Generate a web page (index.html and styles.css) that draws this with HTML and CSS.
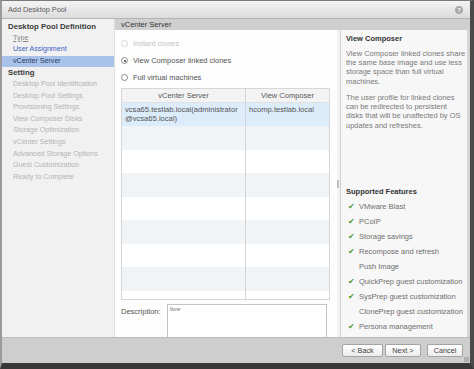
FILE: index.html
```html
<!DOCTYPE html>
<html lang="en">
<head>
    <meta charset="UTF-8">
    <title>Add Desktop Pool</title>
    <link rel="stylesheet" href="styles.css">
</head>
<body>
    <div class="window">
        <div class="titlebar">
            <span class="title">Add Desktop Pool</span>
            <span class="help">?</span>
        </div>

        <div class="body">
            <div class="nav">
                <div class="nav-group">Desktop Pool Definition</div>
                <div class="nav-item done">Type</div>
                <div class="nav-item link">User Assignment</div>
                <div class="nav-item current">vCenter Server</div>
                <div class="nav-group">Setting</div>
                <div class="nav-item">Desktop Pool Identification</div>
                <div class="nav-item">Desktop Pool Settings</div>
                <div class="nav-item">Provisioning Settings</div>
                <div class="nav-item">View Composer Disks</div>
                <div class="nav-item">Storage Optimization</div>
                <div class="nav-item">vCenter Settings</div>
                <div class="nav-item">Advanced Storage Options</div>
                <div class="nav-item">Guest Customization</div>
                <div class="nav-item">Ready to Complete</div>
            </div>

            <div class="page">
                <div class="page-head">vCenter Server</div>
                <div class="page-body">
                    <div class="main">
                        <div class="radios">
                            <label class="radio disabled"><span class="dot"></span>Instant clones</label>
                            <label class="radio checked"><span class="dot"></span>View Composer linked clones</label>
                            <label class="radio"><span class="dot"></span>Full virtual machines</label>
                        </div>

                        <div class="grid">
                            <div class="grid-head">
                                <div class="col-a">vCenter Server</div>
                                <div class="col-b">View Composer</div>
                            </div>
                            <div class="grid-row selected">
                                <div class="col-a">vcsa65.testlab.local(administrator<br>@vcsa65.local)</div>
                                <div class="col-b">hcomp.testlab.local</div>
                            </div>
                            <div class="grid-row alt"><div class="col-a"></div><div class="col-b"></div></div>
                            <div class="grid-row"><div class="col-a"></div><div class="col-b"></div></div>
                            <div class="grid-row alt"><div class="col-a"></div><div class="col-b"></div></div>
                            <div class="grid-row"><div class="col-a"></div><div class="col-b"></div></div>
                            <div class="grid-row alt"><div class="col-a"></div><div class="col-b"></div></div>
                            <div class="grid-row"><div class="col-a"></div><div class="col-b"></div></div>
                            <div class="grid-row alt"><div class="col-a"></div><div class="col-b"></div></div>
                            <div class="grid-row"><div class="col-a"></div><div class="col-b"></div></div>
                        </div>

                        <div class="desc">
                            <span class="desc-label">Description:</span>
                            <div class="desc-box">None</div>
                        </div>
                    </div>

                    <div class="splitter"><span class="grip"></span></div>

                    <div class="info">
                        <h3>View Composer</h3>
                        <p>View Composer linked clones share the same base image and use less storage space than full virtual machines.</p>
                        <p>The user profile for linked clones can be redirected to persistent disks that will be unaffected by OS updates and refreshes.</p>

                        <h3 class="features-title">Supported Features</h3>
                        <ul class="features">
                            <li class="yes">VMware Blast</li>
                            <li class="yes">PCoIP</li>
                            <li class="yes">Storage savings</li>
                            <li class="yes">Recompose and refresh</li>
                            <li>Push Image</li>
                            <li class="yes">QuickPrep guest customization</li>
                            <li class="yes">SysPrep guest customization</li>
                            <li>ClonePrep guest customization</li>
                            <li class="yes">Persona management</li>
                        </ul>
                    </div>
                </div>
            </div>
        </div>

        <div class="footer">
            <button class="btn">&lt; Back</button>
            <button class="btn">Next &gt;</button>
            <button class="btn cancel">Cancel</button>
            <span class="resize"></span>
        </div>
    </div>
</body>
</html>
```

FILE: styles.css
```css
* {
    margin: 0;
    padding: 0;
    box-sizing: border-box;
}

body {
    font-family: 'Liberation Sans', Arial, sans-serif;
    font-size: 7.5px;
    color: #555;
    background: #3c3c3c;
}

.window {
    width: 474px;
    height: 369px;
    display: flex;
    flex-direction: column;
    border-top: 1px solid #7a7a7a;
    border-left: 2px solid #9a9a9a;
    border-right: 4px solid #4a4a4a;
    border-bottom: 6px solid #383838;
    background: #d0d0d0;
}

/* Title bar */
.titlebar {
    height: 18px;
    display: flex;
    align-items: center;
    justify-content: space-between;
    padding: 0 7px 0 6px;
    background: linear-gradient(#f4f4f4, #dcdcdc);
    border-bottom: 1px solid #b4b4b4;
}

.title {
    font-size: 7.3px;
    color: #5a5a5a;
}

.help {
    width: 8px;
    height: 8px;
    border-radius: 50%;
    background: #a8a8a8;
    color: #fff;
    font-size: 6px;
    font-weight: 700;
    display: flex;
    align-items: center;
    justify-content: center;
}

/* Body */
.body {
    flex: 1;
    display: flex;
    min-height: 0;
}

.nav {
    width: 113px;
    background: #f1f1f1;
    padding-top: 2px;
    border-right: 1px solid #dedede;
    font-size: 7.1px;
}

.nav-group,
.nav-item {
    height: 11.6px;
    line-height: 11.6px;
    white-space: nowrap;
}

.nav-group {
    padding-left: 6px;
    font-weight: 700;
    font-size: 7.8px;
    color: #3a3a3a;
}

.nav-item {
    padding-left: 11px;
    color: #b3b3b3;
}

.nav-item.done {
    color: #8a8a8a;
    text-decoration: underline;
}

.nav-item.link {
    color: #3b5cc4;
}

.nav-item.current {
    background: #a9c2ea;
    color: #2c3c5c;
}

.page {
    flex: 1;
    display: flex;
    flex-direction: column;
    min-width: 0;
}

.page-head {
    height: 11px;
    line-height: 11px;
    padding-left: 6px;
    background: #cfcfcf;
    color: #333;
}

.page-body {
    flex: 1;
    display: flex;
    min-height: 0;
}

/* Main content */
.main {
    width: 222px;
    background: #fdfdfd;
    padding: 5px 7px 0 6px;
    overflow: hidden;
}

.radios {
    display: flex;
    flex-direction: column;
}

.radio {
    height: 17px;
    display: flex;
    align-items: center;
    gap: 5px;
    color: #555;
}

.radio.disabled {
    color: #c4c4c4;
}

.dot {
    width: 7px;
    height: 7px;
    border-radius: 50%;
    border: 1px solid #8a8a8a;
    background: #fff;
    position: relative;
}

.disabled .dot {
    border-color: #d2d2d2;
}

.checked .dot::after {
    content: '';
    position: absolute;
    left: 1.5px;
    top: 1.5px;
    width: 2px;
    height: 2px;
    border-radius: 50%;
    background: #333;
}

.grid {
    margin-top: 2px;
    height: 212px;
    border: 1px solid #d6d6d6;
    overflow: hidden;
}

.grid-head,
.grid-row {
    display: flex;
}

.grid-head {
    height: 14px;
    line-height: 13px;
    background: #f3f3f3;
    border-bottom: 1px solid #e0e0e0;
    color: #555;
    text-align: center;
}

.grid-row {
    height: 23.5px;
    background: #fff;
}

.grid-row.alt {
    background: #f1f4f7;
}

.grid-row.selected {
    background: #dcecfa;
    height: 23px;
}

.col-a {
    width: 124px;
    border-right: 1px solid #d4d4d4;
}

.col-b {
    flex: 1;
}

.grid-row .col-a,
.grid-row .col-b {
    padding: 2px 2px 0 3px;
    font-size: 7.6px;
    line-height: 9px;
    color: #555;
    white-space: nowrap;
}

.desc {
    display: flex;
    gap: 6px;
    margin-top: 4px;
}

.desc-label {
    padding-top: 3px;
    color: #555;
}

.desc-box {
    width: 160px;
    height: 40px;
    background: #fff;
    border: 1px solid #c4c4c4;
    padding: 2px;
    font-size: 4.5px;
    font-style: italic;
    color: #666;
}

.splitter {
    width: 3px;
    background: #f4f4f4;
    display: flex;
    align-items: center;
}

.grip {
    width: 2px;
    height: 8px;
    background: #bdbdbd;
}

/* Info panel */
.info {
    width: 129px;
    background: #f7f7f7;
    border-left: 1px solid #d2d2d2;
    border-right: 2px solid #d6d6d6;
    padding: 3.6px 1.4px 0 5px;
    color: #7a7a7a;
    line-height: 9.4px;
}

.info h3 {
    font-size: 7.5px;
    color: #333;
    margin-bottom: 5.6px;
}

.info p + p {
    margin-top: 6.4px;
}

.features-title {
    margin-top: 57px;
}

.info h3.features-title {
    margin-bottom: 0;
}

.features {
    list-style: none;
    margin-top: 2.8px;
}

.features li {
    height: 15px;
    line-height: 15px;
    padding-left: 13px;
    position: relative;
    color: #6e6e6e;
    white-space: nowrap;
}

.features li.yes::before {
    content: '\2714';
    position: absolute;
    left: 2px;
    top: 0;
    color: #4b9a37;
    font-size: 7.5px;
}

/* Footer */
.footer {
    height: 26px;
    display: flex;
    align-items: center;
    justify-content: flex-end;
    gap: 2px;
    padding-right: 7px;
    background: #cecece;
    border-top: 1px solid #bdbdbd;
    position: relative;
}

.btn {
    height: 13px;
    width: 36px;
    font-family: inherit;
    font-size: 7.3px;
    color: #444;
    background: linear-gradient(#ffffff, #ececec);
    border: 1px solid #a3a3a3;
    border-radius: 2px;
}

.btn:first-child {
    width: 41px;
}

.btn.cancel {
    margin-left: 4px;
}

.resize {
    position: absolute;
    right: 1px;
    bottom: 1px;
    width: 5px;
    height: 5px;
    background: radial-gradient(circle, #8c8c8c 0.6px, transparent 0.8px) 0 0 / 2px 2px;
}
```
